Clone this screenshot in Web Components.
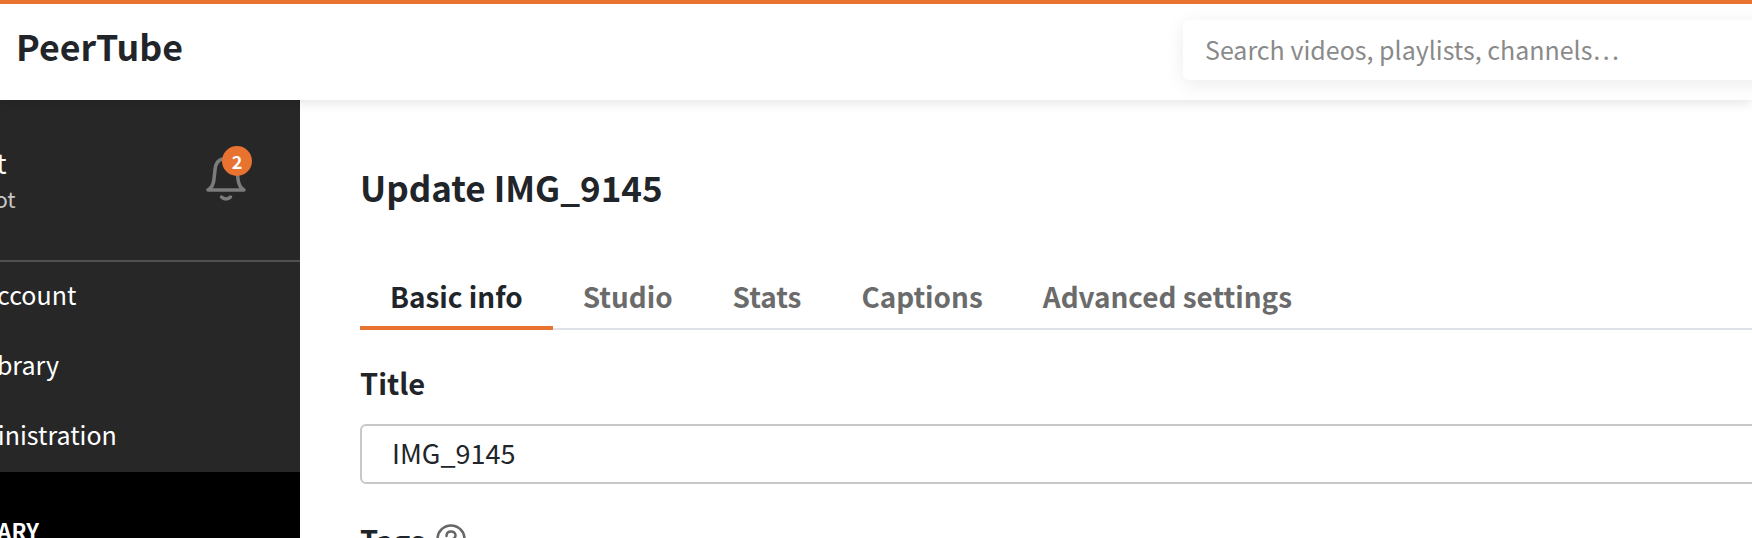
<!DOCTYPE html>
<html lang="en">
<head>
<meta charset="utf-8">
<title>PeerTube</title>
<style>
  html, body { margin: 0; height: 538px; overflow: hidden; background: #fff; }
  body { font-family: "Noto Sans CJK SC", "Noto Sans", sans-serif; color: #212529; }
  .shell { display: flex; height: 438px; }
</style>
</head>
<body>
<pt-header></pt-header>
<div class="shell">
  <pt-sidebar name="root" handle="@root" count="2">
    <pt-menu-item>My account</pt-menu-item>
    <pt-menu-item>My library</pt-menu-item>
    <pt-menu-item>Administration</pt-menu-item>
  </pt-sidebar>
  <pt-update-form title-text="IMG_9145"></pt-update-form>
</div>

<script>
class PtHeader extends HTMLElement {
    constructor() {
        super();
        this.attachShadow({ mode: "open" });
    }

    connectedCallback() {
        this.shadowRoot.innerHTML = `
      <style>
        :host {
          display: flex;
          align-items: center;
          position: relative;
          z-index: 2;
          box-sizing: border-box;
          height: 100px;
          border-top: 4px solid #e8722f;
          background: #fff;
          box-shadow: 0 2px 12px rgba(0, 0, 0, 0.12);
          padding: 0 0 4px 16px;
        }
        .brand { font-size: 35.7px; font-weight: 700; line-height: 48px; flex: none; width: 1167px; margin-top: -8px; color: #212529; }
        .search {
          flex: none;
          box-sizing: border-box;
          width: 640px;
          height: 60px;
          line-height: 58px;
          padding-left: 22px;
          border-radius: 6px;
          background: #fff;
          color: #8a8a8a;
          font-size: 25px;
          box-shadow: 0 4px 20px rgba(0, 0, 0, 0.08);
        }
      </style>
      <div class="brand">PeerTube</div>
      <div class="search">Search videos, playlists, channels…</div>
    `;
    }
}

class PtSidebar extends HTMLElement {
    constructor() {
        super();
        this.attachShadow({ mode: "open" });
    }

    connectedCallback() {
        const name = this.getAttribute("name");
        const handle = this.getAttribute("handle");
        const count = this.getAttribute("count");
        this.shadowRoot.innerHTML = `
      <style>
        :host {
          display: flex;
          flex-direction: column;
          flex: none;
          width: 300px;
          height: 438px;
          overflow: hidden;
          background: #000;
        }
        .top { background: #272727; flex: none; }
        .user {
          display: flex;
          align-items: center;
          box-sizing: border-box;
          height: 162px;
          border-bottom: 2px solid #505050;
        }
        .who { margin-left: -48px; width: 254px; flex: none; }
        .name { font-size: 28px; line-height: 36px; color: #fff; margin-top: -4px; margin-bottom: 3px; }
        .handle { font-size: 22px; line-height: 30px; color: #c8c8c8; }
        .bell { position: relative; flex: none; width: 40px; height: 46px; }
        .bell svg { display: block; }
        .badge {
          position: absolute;
          left: 16px;
          top: -11px;
          width: 30px;
          height: 30px;
          border-radius: 50%;
          background: #e8722f;
          color: #fff;
          font-size: 18px;
          font-weight: 700;
          line-height: 30px;
          text-align: center;
        }
        .section {
          padding: 43px 0 0 0;
          margin-left: -89px;
          font-size: 22px;
          line-height: 30px;
          font-weight: 700;
          color: #fff;
        }
      </style>
      <div class="top">
        <div class="user">
          <div class="who">
            <div class="name">${name}</div>
            <div class="handle">${handle}</div>
          </div>
          <div class="bell">
            <svg width="40" height="46" viewBox="0 0 40 46" fill="none" stroke="#7c7c7c" stroke-width="3.500" stroke-linecap="round" stroke-linejoin="round">
              <path d="M2 33h36c-3.500-2-5.500-5-6-11l-1-9C30.500 5 26 1.500 20 1.500S9.500 5 9 13l-1 9c-.5 6-2.500 9-6 11z"/>
              <path d="M15.500 40c2.500 2.500 6.500 2.500 9 0"/>
            </svg>
            <span class="badge">${count}</span>
          </div>
        </div>
        <slot></slot>
      </div>
      <div class="section">MY LIBRARY</div>
    `;
    }
}

class PtMenuItem extends HTMLElement {
    constructor() {
        super();
        this.attachShadow({ mode: "open" });
        this.shadowRoot.innerHTML = `
      <style>
        :host {
          display: flex;
          align-items: center;
          box-sizing: border-box;
          height: 70px;
          padding-bottom: 7px;
          margin-left: -56px;
          font-size: 25px;
          color: #fff;
          white-space: nowrap;
        }
      </style>
      <slot></slot>
    `;
    }
}

class PtField extends HTMLElement {
    constructor() {
        super();
        this.attachShadow({ mode: "open" });
        this.shadowRoot.innerHTML = `
      <style>
        :host { display: block; font-size: 29px; font-weight: 700; line-height: 36px; color: #212529; }
        .label { display: flex; align-items: center; gap: 11px; }
        .box { margin-top: 24px; }
      </style>
      <div class="label"><slot name="label"></slot></div>
      <div class="box"><slot></slot></div>
    `;
    }
}

class PtUpdateForm extends HTMLElement {
    constructor() {
        super();
        this.attachShadow({ mode: "open" });
    }

    connectedCallback() {
        const title = this.getAttribute("title-text");
        const tabs = ["Basic info", "Studio", "Stats", "Captions", "Advanced settings"];
        this.shadowRoot.innerHTML = `
      <style>
        :host { display: block; flex: 1; min-width: 0; box-sizing: border-box; padding: 63px 0 0 60px; overflow: hidden; }
        h1 { margin: 0; font-size: 35px; line-height: 48px; font-weight: 700; color: #212529; }
        .tabs { display: flex; margin: 59px 0 0 0; border-bottom: 2px solid #dee2e6; height: 58px; }
        .tab {
          box-sizing: border-box;
          height: 60px;
          padding: 0 30px;
          line-height: 52px;
          font-size: 27.9px;
          font-weight: 700;
          color: #6b6b6b;
          white-space: nowrap;
        }
        .tab.active { color: #212529; border-bottom: 4px solid #e8722f; }
        .fields { margin-top: 34px; display: grid; gap: 37px; }
        .input {
          box-sizing: border-box;
          width: 1500px;
          height: 60px;
          padding-left: 30px;
          border: 2px solid #c8c8c8;
          border-radius: 6px;
          line-height: 54px;
          font-size: 27px;
          font-weight: 400;
          color: #212529;
        }
        .help { display: block; flex: none; }
      </style>
      <h1>Update ${title}</h1>
      <div class="tabs">
        ${tabs.map((t, i) => `<div class="tab${i === 0 ? " active" : ""}">${t}</div>`).join("")}
      </div>
      <div class="fields">
        <pt-field>
          <span slot="label">Title</span>
          <div class="input">${title}</div>
        </pt-field>
        <pt-field>
          <span slot="label">Tags</span>
          <svg slot="label" class="help" width="30" height="30" viewBox="0 0 30 30" fill="none" stroke="#666" stroke-width="2.500" stroke-linecap="round">
            <circle cx="15" cy="15" r="13.500"/>
            <path d="M10.500 12c0-3 2-4.500 4.500-4.500s4.500 1.500 4.500 4c0 3.500-4.500 3.500-4.500 7"/>
            <circle cx="15" cy="23" r=".6"/>
          </svg>
        </pt-field>
      </div>
    `;
    }
}

customElements.define("pt-header", PtHeader);
customElements.define("pt-sidebar", PtSidebar);
customElements.define("pt-menu-item", PtMenuItem);
customElements.define("pt-field", PtField);
customElements.define("pt-update-form", PtUpdateForm);
</script>
</body>
</html>
